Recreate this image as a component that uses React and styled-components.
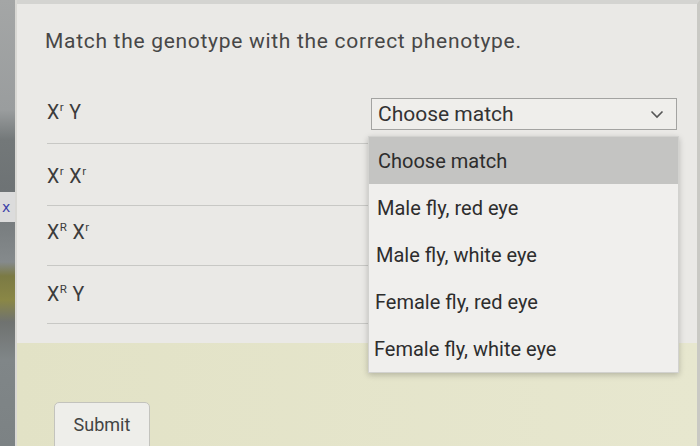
import React from "react";
import styled, { createGlobalStyle } from "styled-components";

const Global = createGlobalStyle`
  html, body { margin: 0; padding: 0; background: #8d9193; }
  body { font-family: Roboto, "Liberation Sans", Arial, sans-serif; }
`;

const Page = styled.div`
  position: relative;
  width: 700px;
  height: 446px;
  display: flex;
  overflow: hidden;
`;

const Strip = styled.div`
  width: 15px;
  flex: none;
  display: flex;
  flex-direction: column;
  background: linear-gradient(
    to bottom,
    #a4a6a6 0px,
    #9a9d9e 110px,
    #737879 140px,
    #6e7375 188px,
    #7b8082 232px,
    #858a8c 262px,
    #7b7a44 276px,
    #8a8746 300px,
    #6f7270 322px,
    #808688 360px,
    #7c8284 446px
  );
  border-right: 2px solid #d9d8d4;
`;

const StripGap = styled.div`
  height: ${(p) => p.$h}px;
  flex: none;
`;

const StripPatch = styled.div`
  height: 30px;
  flex: none;
  background: #dcdcdc;
  color: #3b3fa8;
  font-size: 14px;
  line-height: 30px;
  padding-left: 2px;
  font-family: "DejaVu Sans", sans-serif;
`;

const Panel = styled.div`
  flex: 1;
  display: flex;
  flex-direction: column;
  border-top: 4px solid #d4d4d1;
  border-right: 3px solid #c9c9c4;
  background: #eae9e6;
`;

const Content = styled.div`
  padding: 24px 18px 0 28px;
  height: 339px;
  flex: none;
  box-sizing: border-box;
`;

const Title = styled.h1`
  margin: 0 0 29px 0;
  font-size: 21px;
  font-weight: 400;
  color: #474747;
  letter-spacing: 0.7px;
  line-height: 26px;
`;

const Row = styled.div`
  height: ${(p) => p.$h}px;
  display: flex;
  align-items: center;
  justify-content: space-between;
  margin-left: 2px;
  border-bottom: 1px solid #c8c8c5;
  box-sizing: border-box;
`;

const Label = styled.span`
  font-size: 19.5px;
  color: #3c3c3c;
  letter-spacing: 0.6px;
  margin-top: ${(p) => p.$mt || 0}px;
  sup {
    font-size: 11.5px;
    vertical-align: 8px;
    line-height: 0;
    margin-right: 5px;
  }
`;

const Select = styled.div`
  width: 306px;
  height: 32px;
  margin-right: 2px;
  margin-top: 2px;
  box-sizing: border-box;
  border: 1px solid #a3a3a1;
  background: #efeeeb;
  display: flex;
  align-items: center;
  justify-content: space-between;
  padding: 0 12px 0 6px;
  font-size: 21px;
  color: #333;
`;

const Footer = styled.div`
  flex: 1;
  background: linear-gradient(to right, #e2e2c6, #e7e7cf);
  padding: 59px 0 0 37px;
`;

const Button = styled.button`
  width: 96px;
  height: 50px;
  border: 1px solid #c3c3bd;
  border-radius: 5px;
  background: #eeeeea;
  color: #434343;
  font-family: inherit;
  font-size: 18px;
  padding: 0 0 6px 0;
`;

const Menu = styled.ul`
  position: absolute;
  left: 368px;
  top: 136px;
  width: 309px;
  margin: 0;
  padding: 0;
  list-style: none;
  background: #f0efed;
  border: 1px solid #d2d2cf;
  box-shadow: 0 2px 6px rgba(0, 0, 0, 0.22);
`;

const Item = styled.li`
  height: 47px;
  display: flex;
  align-items: center;
  padding-left: ${(p) => p.$pl}px;
  font-size: 20px;
  color: #2d2d2d;
  background: ${(p) => (p.$active ? "#c4c4c2" : "transparent")};
`;

const Chevron = () => (
  <svg width="14" height="9" viewBox="0 0 14 9">
    <path d="M1.5 1.5 L7 7 L12.5 1.5" fill="none" stroke="#555" strokeWidth="1.6" />
  </svg>
);

const options = [
  "Choose match",
  "Male fly, red eye",
  "Male fly, white eye",
  "Female fly, red eye",
  "Female fly, white eye",
];

export default function App() {
  return (
    <>
      <Global />
      <Page>
        <Strip>
          <StripGap $h={192} />
          <StripPatch>x</StripPatch>
        </Strip>
        <Panel>
          <Content>
            <Title>Match the genotype with the correct phenotype.</Title>
            <Row $h={61}>
              <Label $mt={-2}>
                X<sup>r</sup>Y
              </Label>
              <Select>
                <span>Choose match</span>
                <Chevron />
              </Select>
            </Row>
            <Row $h={62}>
              <Label $mt={4}>
                X<sup>r</sup>X<sup>r</sup>
              </Label>
            </Row>
            <Row $h={60}>
              <Label $mt={-6}>
                X<sup>R</sup>X<sup>r</sup>
              </Label>
            </Row>
            <Row $h={58}>
              <Label>
                X<sup>R</sup>Y
              </Label>
            </Row>
          </Content>
          <Footer>
            <Button>Submit</Button>
          </Footer>
        </Panel>
        <Menu>
          {options.map((o, i) => (
            <Item key={o} $active={i === 0} $pl={9 - i}>
              {o}
            </Item>
          ))}
        </Menu>
      </Page>
    </>
  );
}
